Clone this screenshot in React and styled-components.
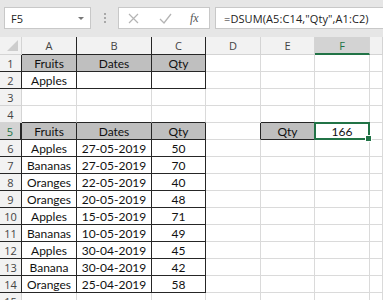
import React from "react";
import styled, { createGlobalStyle, css } from "styled-components";

const GlobalStyle = createGlobalStyle`
  html, body {
    margin: 0;
    padding: 0;
    background: #fff;
  }
  #root {
    width: 383px;
    height: 300px;
    overflow: hidden;
  }
`;

const colors = {
  chrome: "#e6e6e6",
  header: "#f2f2f2",
  headerActive: "#d3d3d3",
  headerLine: "#d4d4d4",
  grid: "#dadada",
  border: "#262626",
  fill: "#bfbfbf",
  green: "#217346",
  text: "#111",
};

const Window = styled.div`
  width: 383px;
  height: 300px;
  overflow: hidden;
  font-family: "Lato", "Liberation Sans", sans-serif;
  background: #fff;
`;

const FormulaBar = styled.div`
  display: flex;
  align-items: flex-start;
  height: 37px;
  box-sizing: border-box;
  padding: 7px 0 0 4px;
  background: ${colors.chrome};
`;

const Box = styled.div`
  display: flex;
  align-items: center;
  height: 22px;
  box-sizing: border-box;
  background: #fff;
  border: 1px solid #c8c8c8;
`;

const NameBox = styled(Box)`
  width: 87px;
  padding: 0 6px;
  justify-content: space-between;
  font-family: "Open Sans", sans-serif;
  font-size: 11px;
  color: #222;
`;

const Caret = styled.span`
  width: 0;
  height: 0;
  border-left: 3px solid transparent;
  border-right: 3px solid transparent;
  border-top: 3px solid #777;
`;

const Grip = styled.div`
  width: 27px;
  height: 22px;
  display: flex;
  flex-direction: column;
  align-items: center;
  justify-content: center;
  gap: 2px;

  span {
    width: 2px;
    height: 2px;
    background: #a8a8a8;
  }
`;

const ActionBox = styled(Box)`
  width: 92px;
  padding: 0 0 0 9px;
`;

const ActionIcon = styled.span`
  display: flex;
  align-items: center;
  margin-right: ${(p) => p.$gap}px;
`;

const Fx = styled.span`
  font-family: "Liberation Serif", serif;
  font-style: italic;
  font-size: 12px;
  color: #555;
`;

const FormulaBox = styled(Box)`
  flex: 1;
  margin-left: 5px;
  margin-right: -2px;
  padding-left: 8px;
  font-family: "Open Sans", sans-serif;
  font-size: 11px;
  letter-spacing: 0.1px;
  color: #222;
  white-space: nowrap;
`;

const Sheet = styled.div`
  display: grid;
  grid-template-columns: 22px 55px 75px 54px 55px 54px 55px 1fr;
  grid-template-rows: 18px;
  grid-auto-rows: 17px;
`;

const Cell = styled.div`
  position: relative;
  box-sizing: border-box;
  display: flex;
  align-items: center;
  justify-content: center;
  font-size: 12px;
  color: ${colors.text};
  white-space: nowrap;
  background: ${(p) => (p.$fill ? colors.fill : "#fff")};
  border-right: 1px solid ${(p) => (p.$r ? colors.border : colors.grid)};
  border-bottom: 1px solid ${(p) => (p.$b ? colors.border : colors.grid)};

  ${(p) =>
    p.$selected &&
    css`
      &::after {
        content: "";
        position: absolute;
        left: -1px;
        top: -1px;
        right: -1px;
        bottom: -1px;
        border: 2px solid ${colors.green};
      }
      &::before {
        content: "";
        position: absolute;
        right: -3px;
        bottom: -3px;
        width: 5px;
        height: 5px;
        background: ${colors.green};
        border: 1px solid #fff;
        z-index: 1;
      }
    `}
`;

const HeadCell = styled.div`
  position: relative;
  box-sizing: border-box;
  display: flex;
  align-items: center;
  justify-content: center;
  overflow: hidden;
  font-family: "Open Sans", sans-serif;
  font-size: 11px;
  color: ${(p) => (p.$active ? colors.green : "#444")};
  background: ${(p) => (p.$active ? colors.headerActive : colors.header)};
  border-right: 1px solid
    ${(p) => (p.$dark ? colors.border : p.$activeSide ? colors.green : colors.headerLine)};
  border-bottom: 1px solid
    ${(p) => (p.$dark ? colors.border : p.$activeEdge ? colors.green : colors.headerLine)};
  ${(p) =>
    p.$activeEdge &&
    css`
      border-bottom-width: 2px;
    `}
  ${(p) =>
    p.$activeSide &&
    css`
      border-right-width: 2px;
    `}
`;

const Corner = styled(HeadCell)`
  &::after {
    content: "";
    position: absolute;
    right: 3px;
    bottom: 3px;
    width: 0;
    height: 0;
    border-left: 11px solid transparent;
    border-bottom: 11px solid #cdcdcd;
  }
`;

const columns = ["A", "B", "C", "D", "E", "F", "G"];
const visibleLabels = new Set(["A", "B", "C", "D", "E", "F"]);

const data = {
  A1: "Fruits", B1: "Dates", C1: "Qty",
  A2: "Apples",
  A5: "Fruits", B5: "Dates", C5: "Qty", E5: "Qty", F5: "166",
  A6: "Apples", B6: "27-05-2019", C6: "50",
  A7: "Bananas", B7: "27-05-2019", C7: "70",
  A8: "Oranges", B8: "22-05-2019", C8: "40",
  A9: "Oranges", B9: "20-05-2019", C9: "48",
  A10: "Apples", B10: "15-05-2019", C10: "71",
  A11: "Bananas", B11: "10-05-2019", C11: "49",
  A12: "Apples", B12: "30-04-2019", C12: "45",
  A13: "Banana", B13: "30-04-2019", C13: "42",
  A14: "Oranges", B14: "25-04-2019", C14: "58",
};

const filled = new Set(["A1", "B1", "C1", "A5", "B5", "C5", "E5"]);

const inRange = (r, c, r1, c1, r2, c2) => r >= r1 && r <= r2 && c >= c1 && c <= c2;

const bordered = (r, c) =>
  inRange(r, c, 1, 0, 2, 2) || inRange(r, c, 5, 0, 14, 2) || inRange(r, c, 5, 4, 5, 5);

const activeRow = 5;
const activeCol = 5;
const rowCount = 15;

const Cross = () => (
  <svg width="11" height="11" viewBox="0 0 11 11">
    <path d="M1 1l9 9M10 1l-9 9" stroke="#b4b4b4" strokeWidth="1.2" fill="none" />
  </svg>
);

const Check = () => (
  <svg width="13" height="11" viewBox="0 0 13 11">
    <path d="M1 6l4 4 7-9" stroke="#b4b4b4" strokeWidth="1.3" fill="none" />
  </svg>
);

const App = () => {
  const rows = [];
  for (let r = 1; r <= rowCount; r++) {
    rows.push(
      <HeadCell
        key={`h${r}`}
        $active={r === activeRow}
        $activeSide={r === activeRow}
        $dark={bordered(r, 0)}
      >
        {r}
      </HeadCell>
    );
    columns.forEach((col, c) => {
      const id = `${col}${r}`;
      rows.push(
        <Cell
          key={id}
          $fill={filled.has(id)}
          $r={bordered(r, c) || bordered(r, c + 1)}
          $b={bordered(r, c) || bordered(r + 1, c)}
          $selected={r === activeRow && c === activeCol}
        >
          {data[id]}
        </Cell>
      );
    });
  }

  return (
    <Window>
      <GlobalStyle />
      <FormulaBar>
        <NameBox>
          F5
          <Caret />
        </NameBox>
        <Grip>
          <span />
          <span />
          <span />
        </Grip>
        <ActionBox>
          <ActionIcon $gap={20}>
            <Cross />
          </ActionIcon>
          <ActionIcon $gap={18}>
            <Check />
          </ActionIcon>
          <Fx>fx</Fx>
        </ActionBox>
        <FormulaBox>=DSUM(A5:C14,"Qty",A1:C2)</FormulaBox>
      </FormulaBar>
      <Sheet>
        <Corner />
        {columns.map((col, c) => (
          <HeadCell
            key={col}
            $active={c === activeCol}
            $activeEdge={c === activeCol}
            $dark={bordered(1, c)}
          >
            {visibleLabels.has(col) ? col : ""}
          </HeadCell>
        ))}
        {rows}
      </Sheet>
    </Window>
  );
};

export default App;
